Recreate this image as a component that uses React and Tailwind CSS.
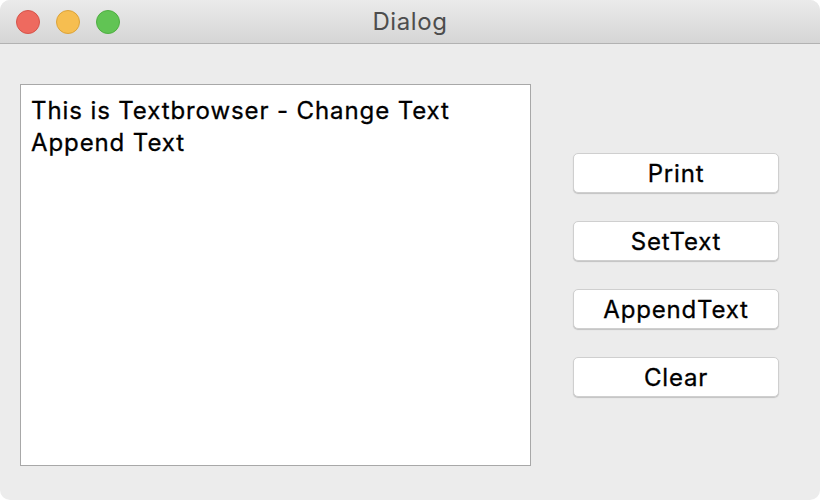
const buttons = ['Print', 'SetText', 'AppendText', 'Clear'];

const TrafficLight = ({ fill, stroke }) => (
  <span
    className="block w-[24px] h-[24px] rounded-full border"
    style={{ backgroundColor: fill, borderColor: stroke }}
  />
);

export default function App() {
  return (
    <div className="w-[820px] h-[500px] bg-white">
      <div
        className="w-full h-full flex flex-col bg-[#ececec] rounded-[10px] overflow-hidden"
        style={{ fontFamily: 'Inter, "Noto Sans", sans-serif' }}
      >
        {/* title bar */}
        <div className="relative h-[44px] shrink-0 flex items-center bg-gradient-to-b from-[#ebebeb] to-[#d5d5d5] border-b border-[#b2b2b2]">
          <div className="flex items-center gap-[16px] pl-[16px]">
            <TrafficLight fill="#ee6a5f" stroke="#d5544a" />
            <TrafficLight fill="#f6be50" stroke="#dba33a" />
            <TrafficLight fill="#61c454" stroke="#4fae42" />
          </div>
          <div className="absolute inset-0 flex items-center justify-center text-[24px] tracking-[0.6px] text-[#4d4d4d] pt-[1px]">
            Dialog
          </div>
        </div>

        {/* body */}
        <div className="flex pl-[20px] pt-[40px] gap-[42px]">
          <div className="w-[511px] h-[382px] bg-white border border-[#a8a8a8] px-[10px] pt-[10px] text-[24px] leading-[32px] tracking-[0.9px] text-black [-webkit-text-stroke:0.3px_black]">
            <div>This is Textbrowser - Change Text</div>
            <div>Append Text</div>
          </div>

          <div className="flex flex-col justify-center gap-[28px]">
            {buttons.map((label) => (
              <button
                key={label}
                className="w-[206px] h-[40px] bg-white rounded-[5px] border border-[#cfcfcf] shadow-[0_1px_1px_rgba(0,0,0,0.18)] text-[24px] leading-none tracking-[0.8px] text-black [-webkit-text-stroke:0.3px_black] flex items-center justify-center pt-[1px]"
              >
                {label}
              </button>
            ))}
          </div>
        </div>
      </div>
    </div>
  );
}
